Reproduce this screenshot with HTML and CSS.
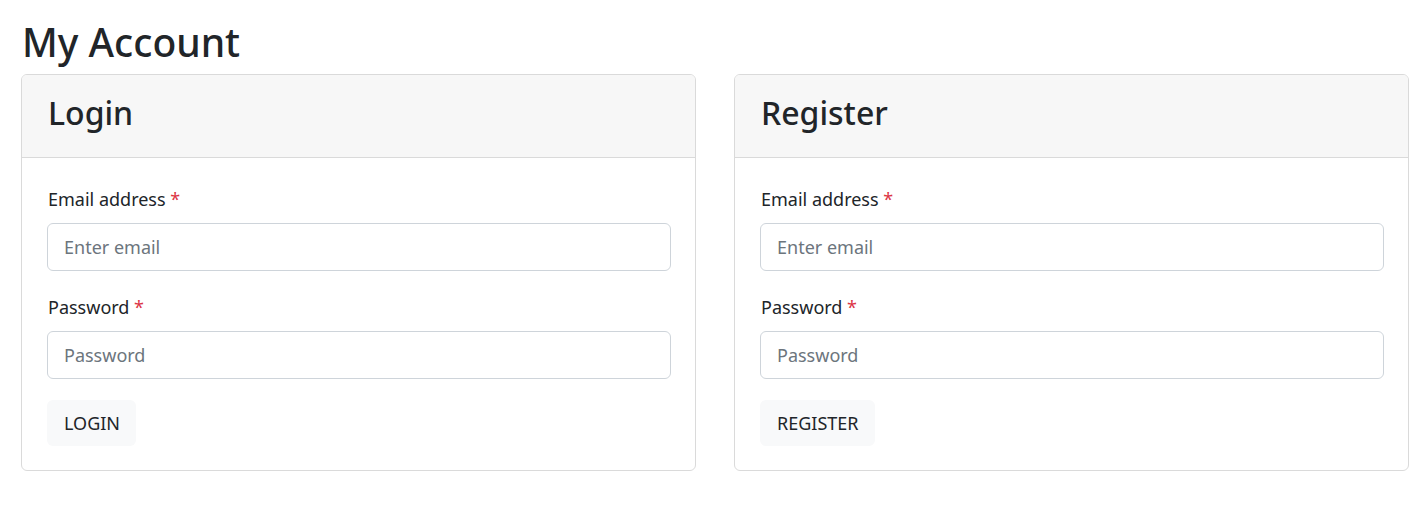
FILE: index.html
```html
<!DOCTYPE html>
<html lang="en">
<head>
    <meta charset="UTF-8">
    <meta name="viewport" content="width=device-width, initial-scale=1.0">
    <title>My Account</title>
    <link rel="stylesheet" href="styles.css">
</head>
<body>
    <div class="page">
        <h1 class="page-title">My Account</h1>
        <div class="row">
            <div class="card">
                <div class="card-header">
                    <h2>Login</h2>
                </div>
                <form class="card-body" onsubmit="return false;">
                    <div class="form-group">
                        <label for="login_email">Email address <span class="req">*</span></label>
                        <input type="email" id="login_email" placeholder="Enter email">
                    </div>
                    <div class="form-group">
                        <label for="login_password">Password <span class="req">*</span></label>
                        <input type="password" id="login_password" placeholder="Password">
                    </div>
                    <button type="submit" class="light-btn">LOGIN</button>
                </form>
            </div>

            <div class="card">
                <div class="card-header">
                    <h2>Register</h2>
                </div>
                <form class="card-body" onsubmit="return false;">
                    <div class="form-group">
                        <label for="reg_email">Email address <span class="req">*</span></label>
                        <input type="email" id="reg_email" placeholder="Enter email">
                    </div>
                    <div class="form-group">
                        <label for="reg_password">Password <span class="req">*</span></label>
                        <input type="password" id="reg_password" placeholder="Password">
                    </div>
                    <button type="submit" class="light-btn">REGISTER</button>
                </form>
            </div>
        </div>
    </div>
</body>
</html>
```

FILE: styles.css
```css
body {
    font-family: "Noto Sans", "Open Sans", Arial, sans-serif;
    color: #212529;
    background-color: #fff;
    margin: 0;
}

.page {
    padding: 19px 18px 0 21px;
}

.page-title {
    font-size: 39px;
    font-weight: 500;
    line-height: 1.2;
    margin: 0 0 8px 1px;
}

.row {
    display: grid;
    grid-template-columns: 1fr 1fr;
    gap: 38px;
}

.card {
    border: 1px solid #dadada;
    border-radius: 6px;
    overflow: hidden;
}

.card-header {
    background-color: #f7f7f7;
    border-bottom: 1px solid #dadada;
    padding: 19px 25px 25px;
}

.card-header h2 {
    font-size: 32px;
    font-weight: 500;
    line-height: 1.2;
    margin: 0 0 0 1px;
}

.card-body {
    padding: 26px 24px 24px 25px;
}

.form-group {
    margin-bottom: 21px;
}

.form-group label {
    display: block;
    font-size: 18px;
    line-height: 30px;
    margin-bottom: 9px;
    padding-left: 1px;
}

.req {
    color: #dc3545;
}

input {
    display: block;
    box-sizing: border-box;
    width: 100%;
    height: 48px;
    padding: 8px 16px;
    font-family: inherit;
    font-size: 18px;
    color: #212529;
    border: 1px solid #ced4da;
    border-radius: 6px;
}

input::placeholder {
    color: #6c757d;
}

.light-btn {
    display: block;
    height: 46px;
    margin-top: 0;
    padding: 0 16px 0 17px;
    font-family: inherit;
    font-size: 18px;
    color: #212529;
    background-color: #f8f9fa;
    border: none;
    border-radius: 6px;
    cursor: pointer;
}
```
